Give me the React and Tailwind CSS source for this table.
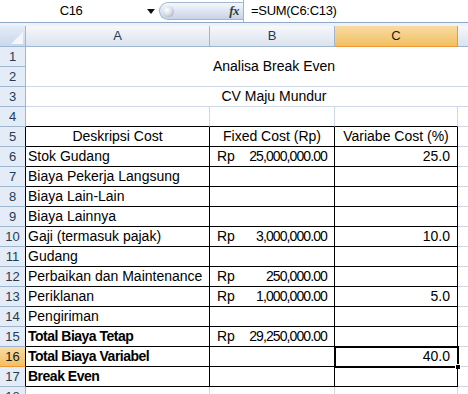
import React from 'react'

// Excel 2007 style sheet: formula bar + grid A..D, rows 1..18

const rows = [
  { n: 6, a: 'Stok Gudang', rp: true, b: '25,000,000.00', c: '25.0' },
  { n: 7, a: 'Biaya Pekerja Langsung' },
  { n: 8, a: 'Biaya Lain-Lain' },
  { n: 9, a: 'Biaya Lainnya' },
  { n: 10, a: 'Gaji (termasuk pajak)', rp: true, b: '3,000,000.00', c: '10.0' },
  { n: 11, a: 'Gudang' },
  { n: 12, a: 'Perbaikan dan Maintenance', rp: true, b: '250,000.00' },
  { n: 13, a: 'Periklanan', rp: true, b: '1,000,000.00', c: '5.0' },
  { n: 14, a: 'Pengiriman' },
  { n: 15, a: 'Total Biaya Tetap', bold: true, rp: true, b: '29,250,000.00' },
  { n: 16, a: 'Total Biaya Variabel', bold: true, c: '40.0', selected: true },
  { n: 17, a: 'Break Even', bold: true },
]

function RowHead({ n, table, active }) {
  const bg = active
    ? 'bg-linear-to-b from-[#f9dba3] to-[#f1c05e] border-b-[#f29536] text-[#1b1b1b]'
    : 'bg-[#e4ecf7] border-b-[#9eb6ce] text-[#243b55]'
  const right = table ? 'border-r-black' : 'border-r-[#9eb6ce]'
  return (
    <div className={`flex items-center justify-center border-r border-b text-[13px] ${bg} ${right}`}>
      {n}
    </div>
  )
}

function ColHead({ label, active, last }) {
  const bg = active
    ? 'bg-linear-to-b from-[#f9dba3] to-[#f1c05e] border-b-[#f29536] border-r-[#f29536] text-[#1b1b1b]'
    : 'bg-linear-to-b from-[#f6f8fb] to-[#dbe3ee] border-b-[#9eb6ce] border-r-[#9eb6ce] text-[#243b55]'
  return (
    <div className={`flex items-center justify-center border-b ${last ? '' : 'border-r'} text-[13px] ${bg}`}>
      {label}
    </div>
  )
}

function FormulaBar() {
  return (
    <div className="flex h-[23px] border-b border-[#8ea8c6] bg-white">
      <div className="w-[142px] flex items-center justify-center text-[13px] tracking-[-0.4px]">C16</div>
      <div className="w-[17px] flex items-center justify-center">
        <svg width="8" height="5" viewBox="0 0 8 5">
          <path d="M0 0 H8 L4 5 Z" fill="#111" />
        </svg>
      </div>
      <div className="w-[84px] py-[2px]">
        <div className="h-full rounded-l-full border border-r-0 border-[#a3b6cd] bg-linear-to-b from-[#f4f7fb] to-[#c7d4e6] flex items-center justify-between pl-[3px] pr-[4px]">
          <div className="w-[11px] h-[11px] rounded-full bg-radial-[at_35%_35%] from-white via-[#d7dde5] to-[#8c98a8]" />
          <span className="font-['Liberation_Serif',serif] italic font-bold text-[13px] text-[#3a3a3a] tracking-[-0.5px]">fx</span>
        </div>
      </div>
      <div className="flex-1 border-l border-[#9eb6ce] pl-[7px] flex items-center text-[13px] tracking-[-0.3px]">
        =SUM(C6:C13)
      </div>
    </div>
  )
}

function DataRow({ r }) {
  const txt = r.bold ? 'font-bold tracking-[-0.5px]' : ''
  return (
    <>
      <RowHead n={r.n} table active={r.selected} />
      <div className={`flex items-center px-[2px] border-r border-b border-black whitespace-nowrap ${txt}`}>{r.a}</div>
      <div className="flex items-center justify-between pl-[7px] pr-[7px] border-r border-b border-black whitespace-nowrap">
        <span>{r.rp ? 'Rp' : ''}</span>
        <span className="tracking-[-0.9px]">{r.b}</span>
      </div>
      <div className="relative flex items-center justify-end pr-[7px] border-r border-b border-black">
        {r.c}
        {r.selected && (
          <div className="absolute left-[-1px] top-[-1px] right-[-2px] bottom-[-2px] border-2 border-black">
            <div className="absolute right-[-4px] bottom-[-4px] w-[6px] h-[6px] bg-black border border-white" />
          </div>
        )}
      </div>
      <div className="border-b border-[#d0d7e5]" />
    </>
  )
}

export default function App() {
  return (
    <div className="w-[468px] h-[394px] overflow-hidden bg-white font-['Liberation_Sans',Arial,sans-serif] text-[14px] text-black">
      <FormulaBar />
      <div className="h-[3px] bg-[#eef2f8]" />
      <div className="grid grid-cols-[26px_184px_125px_123px_64px] grid-rows-[21px_repeat(18,20px)] w-[522px]">
        {/* header row */}
        <div className="relative border-r border-b border-[#9eb6ce] bg-linear-to-b from-[#e4ecf7] to-[#c9d8ec]">
          <svg className="absolute right-[2px] bottom-[2px]" width="12" height="12" viewBox="0 0 12 12">
            <path d="M12 0 V12 H0 Z" fill="#f4f6f9" />
          </svg>
        </div>
        <ColHead label="A" />
        <ColHead label="B" />
        <ColHead label="C" active />
        <ColHead label="" last />

        {/* rows 1-2: merged title */}
        <RowHead n={1} />
        <div className="col-span-4 row-span-2 flex items-center justify-center border-b border-[#d0d7e5]">
          Analisa Break Even
        </div>
        <RowHead n={2} />

        {/* row 3 */}
        <RowHead n={3} />
        <div className="col-span-4 flex items-center justify-center border-b border-[#d0d7e5]">CV Maju Mundur</div>

        {/* row 4 */}
        <RowHead n={4} />
        <div className="border-r border-[#d0d7e5] border-b border-b-black" />
        <div className="border-r border-[#d0d7e5] border-b border-b-black" />
        <div className="border-r border-[#d0d7e5] border-b border-b-black" />
        <div className="border-b border-[#d0d7e5]" />

        {/* row 5: table header */}
        <RowHead n={5} table />
        <div className="flex items-center justify-center border-r border-b border-black">Deskripsi Cost</div>
        <div className="flex items-center justify-center border-r border-b border-black">Fixed Cost (Rp)</div>
        <div className="flex items-center justify-center border-r border-b border-black">Variabe Cost (%)</div>
        <div className="border-b border-[#d0d7e5]" />

        {rows.map((r) => (
          <DataRow key={r.n} r={r} />
        ))}

        {/* row 18 */}
        <RowHead n={18} />
        <div className="border-r border-b border-[#d0d7e5]" />
        <div className="border-r border-b border-[#d0d7e5]" />
        <div className="border-r border-b border-[#d0d7e5]" />
        <div className="border-b border-[#d0d7e5]" />
      </div>
    </div>
  )
}
